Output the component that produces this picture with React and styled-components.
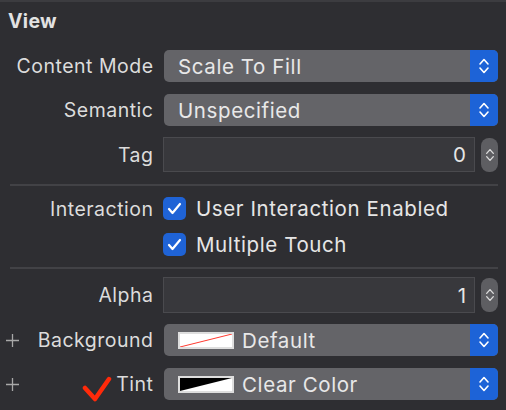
import React from 'react';
import styled, { createGlobalStyle } from 'styled-components';

const Global = createGlobalStyle`
  html, body {
    margin: 0;
    padding: 0;
    background: #2e2e32;
  }
`;

const Panel = styled.div`
  width: 506px;
  height: 410px;
  box-sizing: border-box;
  background: #2e2e32;
  border-top: 2px solid #3c3c40;
  padding-right: 8px;
  font-family: Inter, "Noto Sans", sans-serif;
  color: #dedede;
  overflow: hidden;
`;

const Header = styled.div`
  height: 38px;
  display: flex;
  align-items: center;
  padding-left: 8px;
  font-size: 19.5px;
  font-weight: 700;
  letter-spacing: 0.3px;
  color: #e2e2e2;
`;

const Row = styled.div`
  display: grid;
  grid-template-columns: 153px 1fr;
  column-gap: 10px;
  height: ${p => p.$h}px;
  margin-top: ${p => p.$mt}px;
  align-items: center;
`;

const Label = styled.div`
  position: relative;
  display: flex;
  align-items: center;
  justify-content: space-between;
  padding-left: 5px;
  font-size: 19.5px;
  letter-spacing: 0.5px;
  color: #dcdcdc;
  white-space: nowrap;
`;

const LabelText = styled.span`
  margin-left: auto;
  margin-right: -0.5px;
`;

const Separator = styled.div`
  height: 2px;
  background: #424246;
  margin: ${p => p.$mt}px 0 0 10px;
`;

const Popup = styled.div`
  display: flex;
  align-items: center;
  height: 32px;
  margin-left: 1px;
  border-radius: 5px;
  background: #646468;
  overflow: hidden;
`;

const PopupValue = styled.div`
  flex: 1;
  display: flex;
  align-items: center;
  gap: 8px;
  padding-left: 14px;
  font-size: 20.5px;
  letter-spacing: 0.6px;
  color: #e8e8e8;
`;

const BlueEnd = styled.div`
  width: 28px;
  height: 100%;
  background: #1d63d7;
  display: flex;
  align-items: center;
  justify-content: center;
`;

const Swatch = styled.div`
  width: 56px;
  height: 17px;
  box-sizing: border-box;
  border: 2px solid #dedede;
  background: #fff;
  overflow: hidden;
  display: flex;
  flex: none;
`;

const FieldWrap = styled.div`
  display: flex;
  align-items: center;
  gap: 6px;
  height: 100%;
`;

const Field = styled.div`
  flex: 1;
  height: 100%;
  box-sizing: border-box;
  background: #38383c;
  border: 1px solid #4a4a4e;
  display: flex;
  align-items: center;
  justify-content: flex-end;
  padding-right: 8px;
  font-size: 20.5px;
  color: #e6e6e6;
`;

const Stepper = styled.div`
  width: 17px;
  height: ${p => p.$h}px;
  border-radius: 8px;
  background: #5e5e62;
  display: flex;
  align-items: center;
  justify-content: center;
`;

const CheckLine = styled.div`
  display: flex;
  align-items: center;
  gap: 10px;
  font-size: 20.5px;
  letter-spacing: 0.6px;
  color: #e6e6e6;
`;

const Box = styled.div`
  width: 23px;
  height: 23px;
  border-radius: 5px;
  background: #1f63d6;
  display: flex;
  align-items: center;
  justify-content: center;
`;

const Plus = styled.svg`
  flex: none;
`;

const RedMark = styled.svg`
  position: absolute;
  left: 82px;
  top: 50%;
  margin-top: -9px;
`;

function Chevrons({ color = '#fff', w = 12, h = 22 }) {
  return (
    <svg width={w} height={h} viewBox="0 0 12 22">
      <path d="M2 9 L6 4.5 L10 9" fill="none" stroke={color} strokeWidth="1.6" strokeLinecap="round" strokeLinejoin="round" />
      <path d="M2 13 L6 17.5 L10 13" fill="none" stroke={color} strokeWidth="1.6" strokeLinecap="round" strokeLinejoin="round" />
    </svg>
  );
}

function Tick() {
  return (
    <svg width="15" height="13" viewBox="0 0 15 13">
      <path d="M2 7 L5.5 11 L13 2" fill="none" stroke="#fff" strokeWidth="2.2" strokeLinecap="round" strokeLinejoin="round" />
    </svg>
  );
}

function PlusIcon() {
  return (
    <Plus width="15" height="15" viewBox="0 0 15 15">
      <path d="M7.5 1 V14 M1 7.5 H14" stroke="#a8a8a8" strokeWidth="1.3" />
    </Plus>
  );
}

function PopupButton({ swatch, children }) {
  return (
    <Popup>
      <PopupValue>
        {swatch}
        {children}
      </PopupValue>
      <BlueEnd><Chevrons /></BlueEnd>
    </Popup>
  );
}

function NumberField({ value, h }) {
  return (
    <FieldWrap>
      <Field>{value}</Field>
      <Stepper $h={h}><Chevrons color="#dcdcdc" w={10} h={20} /></Stepper>
    </FieldWrap>
  );
}

const DefaultSwatch = (
  <Swatch>
    <svg width="52" height="13" viewBox="0 0 52 13" preserveAspectRatio="none">
      <line x1="0" y1="13" x2="52" y2="0" stroke="#ff3b30" strokeWidth="1" />
    </svg>
  </Swatch>
);

const ClearSwatch = (
  <Swatch>
    <svg width="52" height="13" viewBox="0 0 52 13" preserveAspectRatio="none">
      <polygon points="0,0 52,0 0,13" fill="#000" />
    </svg>
  </Swatch>
);

export default function App() {
  return (
    <>
      <Global />
      <Panel>
        <Header>View</Header>

        <Row $h={32} $mt={10}>
          <Label><LabelText>Content Mode</LabelText></Label>
          <PopupButton>Scale To Fill</PopupButton>
        </Row>

        <Row $h={32} $mt={12}>
          <Label><LabelText>Semantic</LabelText></Label>
          <PopupButton>Unspecified</PopupButton>
        </Row>

        <Row $h={35} $mt={11}>
          <Label><LabelText>Tag</LabelText></Label>
          <NumberField value="0" h={34} />
        </Row>

        <Separator $mt={12} />

        <Row $h={24} $mt={10}>
          <Label><LabelText>Interaction</LabelText></Label>
          <CheckLine><Box><Tick /></Box>User Interaction Enabled</CheckLine>
        </Row>

        <Row $h={24} $mt={12}>
          <Label />
          <CheckLine><Box><Tick /></Box>Multiple Touch</CheckLine>
        </Row>

        <Separator $mt={11} />

        <Row $h={36} $mt={8}>
          <Label><LabelText>Alpha</LabelText></Label>
          <NumberField value="1" h={34} />
        </Row>

        <Row $h={32} $mt={11}>
          <Label><PlusIcon /><LabelText>Background</LabelText></Label>
          <PopupButton swatch={DefaultSwatch}>Default</PopupButton>
        </Row>

        <Row $h={32} $mt={12}>
          <Label>
            <PlusIcon />
            <LabelText>Tint</LabelText>
            <RedMark width="30" height="28" viewBox="0 0 30 28">
              <path d="M3 13 L13 24 L27 4" fill="none" stroke="#ff2a0a" strokeWidth="4.5" strokeLinecap="round" strokeLinejoin="round" />
            </RedMark>
          </Label>
          <PopupButton swatch={ClearSwatch}>Clear Color</PopupButton>
        </Row>
      </Panel>
    </>
  );
}
